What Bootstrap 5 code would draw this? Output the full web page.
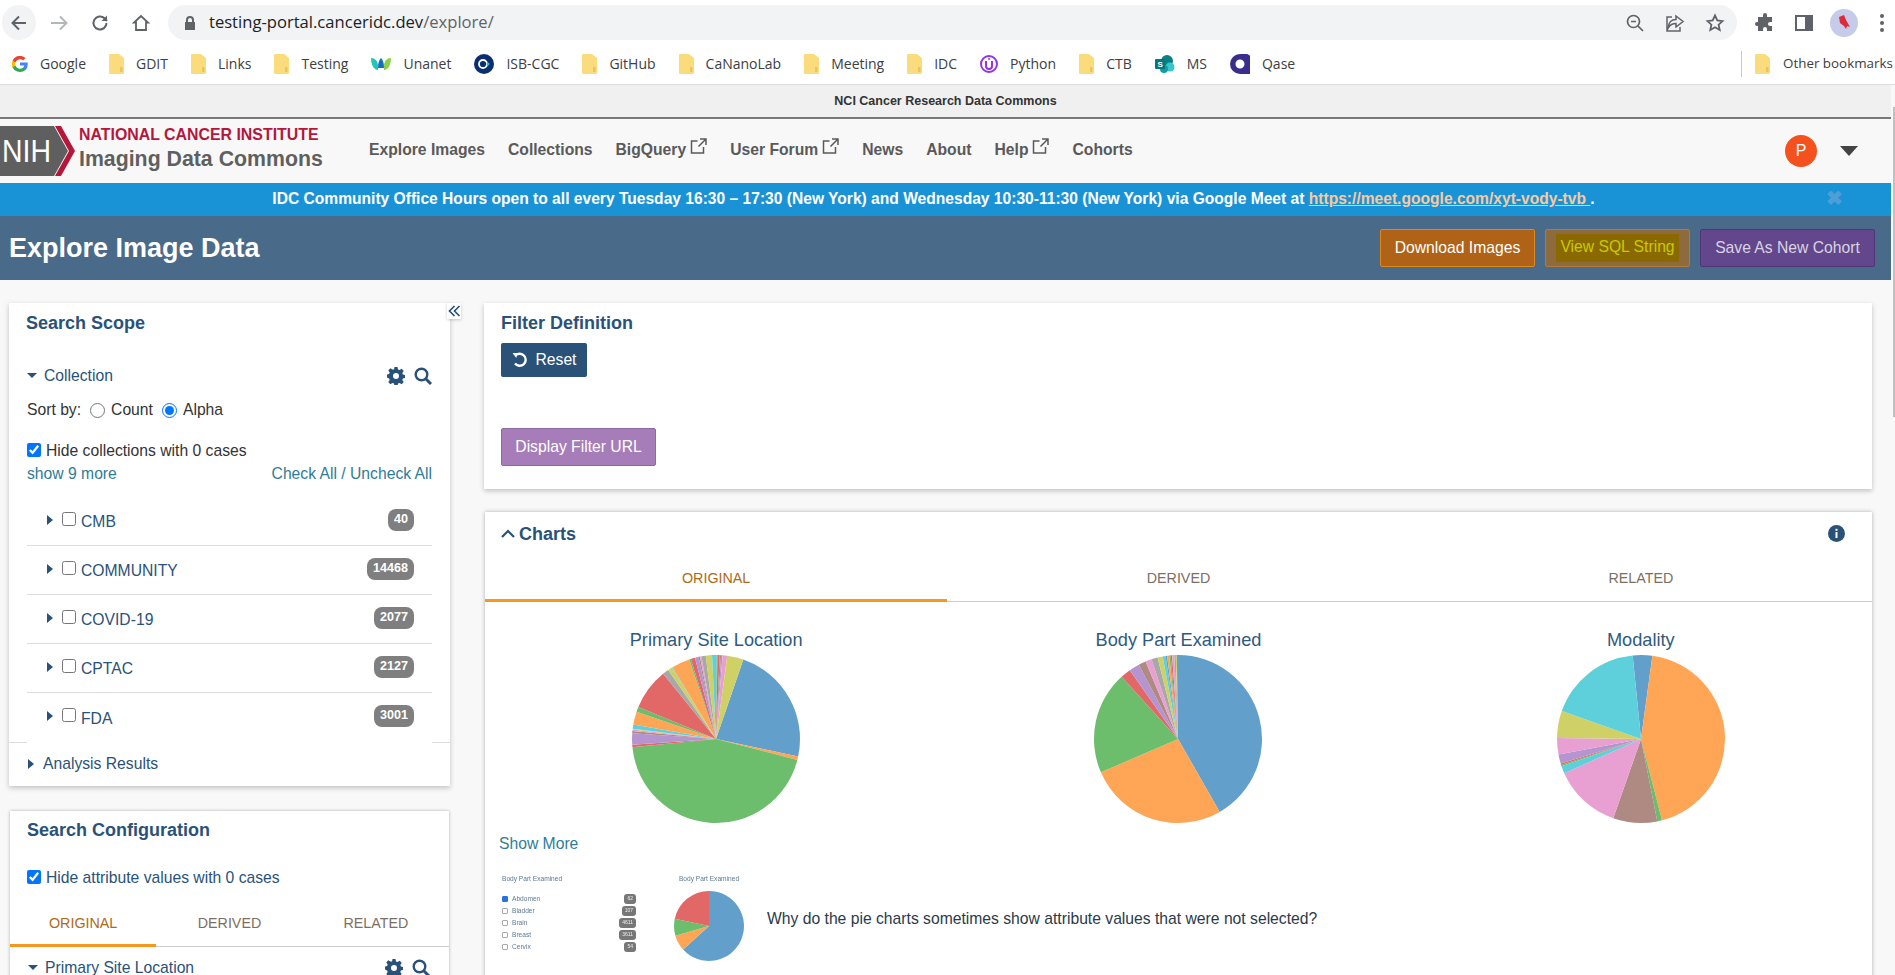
<!DOCTYPE html>
<html lang="en">
<head>
<meta charset="utf-8">
<title>Explore Image Data</title>
<link href="https://cdn.jsdelivr.net/npm/bootstrap@5.3.0/dist/css/bootstrap.min.css" rel="stylesheet">
<style>
html,body{height:975px;overflow:hidden;background:#fff}
body{font-family:"Liberation Sans",Arial,sans-serif;font-size:15.7px;color:#333;width:1895px}
/* browser chrome */
.bc-top{height:40px;padding:5px 0 0 2px}
.bc-round{width:34px;height:35px;border-radius:50%;background:#f1f3f4}
.bc-ico{width:20px;height:20px;flex:none}
.bc-trio{margin-left:13px;gap:21px}
.bc-url{height:35px;width:1570px;margin-left:17px;background:#f1f3f4;border-radius:18px;padding:0 12px 0 15px;font-family:"Open Sans","Liberation Sans",sans-serif;font-size:16.6px;color:#202124}
.bc-url span.gr{color:#5f6368}
.bc-url-tools{gap:20px}
.bc-right{width:158px;padding-left:18px}
.bc-avatar{margin-left:16px}
.bc-dots{margin-left:22px}
.bc-panel{margin-left:19px}
.bc-marks{height:45px;border-bottom:1px solid #dadce0;padding:3px 0 0 12px;font-family:"Open Sans","Liberation Sans",sans-serif;font-size:14px;color:#3c4043;gap:23px}
.bm{gap:12px}
.bm svg{flex:none}
.bm-sep{width:1px;height:26px;background:#c8c8c8}
.bm-other{margin-left:auto;gap:13px}
.bm-fit{width:112px;white-space:nowrap;font-size:13.4px}
/* page */
.page-wrap{height:890px}
.page-main{width:1891px;background:#f8f8f8;overflow:hidden}
.scroll-col{width:4px;background:#f8f8f8;padding-left:2px}
.scroll-thumb{height:310px;margin-top:22px;background:#c0c0c0}
.nci-band{height:34px;background:#f0f0f0;border-bottom:2px solid #777;font-size:12.5px;font-weight:700;color:#333}
.nci-nav{height:64px;padding:0;background:#f8f8f8}
.nci-logo{width:369px;flex:none}
.nci-link{font-size:15.7px;font-weight:700;color:#5a5a5a;text-decoration:none;padding:0;white-space:nowrap}
.nav-gap{gap:23px;padding-bottom:2px}
.nci-avatar{width:32px;height:32px;border-radius:50%;background:#f4511e;color:#fff;font-size:16px}
.nav-end{padding-right:33px;gap:23px}
.nav-caret{width:0;height:0;border-left:9px solid transparent;border-right:9px solid transparent;border-top:10px solid #444}
.info-banner{height:33px;background:#1a92d6;color:#fff;font-size:15.6px;font-weight:700;position:relative;padding-bottom:1px;padding-right:24px}
.info-banner a{color:#f7caa0}
.banner-x{position:absolute;left:1826px;top:4px;color:#4d9fd6;font-size:20px;line-height:22px;font-weight:700}
.title-band{height:64px;background:#4a6a89;padding:0 16px 0 9px}
.title-band h1{font-size:27px;font-weight:700;color:#fff;margin:0}
.band-btn{height:38px;font-size:15.7px;padding:0 10px;border-radius:2px;border:1px solid;display:flex;align-items:center;color:#fff;white-space:nowrap}
.band-dl{background:#b06316;border-color:#dc8a1e;width:155px;margin-right:10px;justify-content:center}
.band-sql{background:#8e6b3c;border-color:#b07a3a;color:#c9c900;width:145px;margin-right:10px;justify-content:center}
.band-sql span{background:#8a6a00;padding:1px 0 4px;width:128px;display:block;text-align:center}
.band-save{background:#63478c;border-color:#4e3676;color:#d9d3e4;width:175px;justify-content:center}
/* columns */
.body-row{padding:23px 19px 0 9px;height:631px}
.side-col{width:441px;flex:none;position:relative}
.main-col{margin-left:34px;width:1388px;flex:none}
.panel-box{background:#fff;box-shadow:0 2px 5px rgba(0,0,0,.22)}
.panel-scope{height:483px}
.panel-config{margin:25px 1px 0;height:300px;box-shadow:0 0 3px rgba(0,0,0,.3)}
.panel-title{font-size:18px;font-weight:700;color:#2a5278;margin:0;line-height:20px}
.collapse-tab{position:absolute;left:438px;top:0;width:14px;height:16px;background:#fff;box-shadow:0 1px 3px rgba(0,0,0,.2);display:flex;align-items:center;justify-content:center}
.navy{color:#2a5278}
.tealish{color:#2f7c95;text-decoration:none}
.fac-head{height:24px;padding:0 18px;color:#2a5278}
.scope-fac{margin-top:31px}
.fac-ctrl{gap:9px}
.dcaret{width:0;height:0;border-left:5px solid transparent;border-right:5px solid transparent;border-top:5px solid #2a5278;margin-right:7px}
.rcaret{width:0;height:0;border-top:5px solid transparent;border-bottom:5px solid transparent;border-left:6px solid #2a5278;flex:none}
input.nat{margin:0;flex:none}
input.nat[type=checkbox]{width:14px;height:14px}
input.nat[type=radio]{width:15px;height:15px}
.sort-row{height:22px;padding-left:18px;margin-top:11px}
input.nat.radio-a{margin-left:9px;margin-right:6px}
input.nat.radio-b{margin-left:9px;margin-right:6px}
.hide-row{height:22px;padding-left:18px;margin-top:19px}
.hide-row input.nat{margin-right:5px;margin-top:-3px}
.hide-row.hide-cfg{height:22px;padding-left:17px;margin-top:27px}
.link-row{height:22px;padding:0 18px;margin-top:1px}
.fac-list{margin:12px 18px 0;list-style:none;padding:0}
.fac-li{height:49px;border-bottom:1px solid #ddd;padding:0 0 0 20px;color:#2a5278}
.fac-li:last-child{border-bottom:0}
.fac-li .rcaret{margin-right:9px;margin-top:-3px}
.fac-li input.nat{margin-right:5px;margin-top:-5px}
.cnt-pill{margin-left:auto;margin-right:18px;background:#7f7f7f;color:#fff;font-weight:700;font-size:12.6px;line-height:20px;height:22px;padding:0 6px 2px;border-radius:8px;margin-top:-3px;min-width:25px;text-align:center}
.fac-li .txt{margin-top:2px}
.line-ends{border-top:1px solid #ddd;height:0;width:100%}
.line-ends::before{content:"";display:block;height:1px;margin:-1px 18px 0;background:#fff}
.analysis{height:45px;padding:0 0 4px 19px;color:#2a5278}
.analysis .rcaret{margin-right:9px}
.tab-bar{display:flex;border-bottom:1px solid #ccc;margin:0}
.tab-item{flex:1 1 0;text-align:center;font-size:14.3px;color:#7d6f63;text-transform:uppercase;padding:0;line-height:20px;text-decoration:none;border-bottom:3px solid transparent;margin-bottom:-1px}
.tab-item.on{color:#b06a17;border-bottom-color:#f7971d}
.tabs-side{margin-top:14px}
.tabs-side .tab-item{padding:10px 0 11px}
.tabs-chart .tab-item{padding:12px 0 11px}
.side-fac{margin-top:9px;padding-left:18px;padding-right:19px}
.side-pad{padding:10px 17px 0}
.cfg-pad{padding:9px 17px 0}
.filter-box{height:186px;padding:10px 17px}
.btn-reset{background:#2a5278;color:#fff;height:34px;width:86px;border:0;border-radius:2px;font-size:15.7px;margin-top:10px}
.btn-url{background:#a67db8;border:1px solid #8c6ba0;color:#fff;height:38px;width:155px;border-radius:2px;font-size:15.7px;margin-top:51px;display:block;padding:0}
.charts-box{margin:23px 0 0 1px;width:1387px;height:480px;box-shadow:0 0 4px rgba(0,0,0,.3)}
.charts-head{height:43px;padding:0 27px 0 16px;margin-bottom:1px}
.chart-grid{display:grid;grid-template-columns:repeat(3,1fr);padding-top:27px}
.chart-cell{text-align:center}
.chart-name{font-size:18.2px;color:#2f5a80;line-height:22px;margin-bottom:3px}
.pie-svg{display:block;margin:0 auto}
.show-more{display:block;margin:9px 0 0 14px;line-height:22px}
.help-row{margin-top:19px;padding-left:17px}
.thumb{width:265px;height:100px;flex:none;filter:blur(.4px);color:#5d7a96;font-size:6.6px}
.thumb-list{width:134px}
.thumb-title{margin-bottom:10px;line-height:9px;height:9px}
.thumb-row{height:12px}
.thumb-row i{display:block;width:6px;height:6px;border:1px solid #aaa;border-radius:1px;margin-right:4px}
.thumb-row i.ck{background:#2a72e0;border-color:#2a72e0}
.thumb-row b{margin-left:auto;background:#777;color:#eee;border-radius:3px;font-weight:400;font-size:5px;padding:1px 3px}
.thumb-pie{margin-left:37px;text-align:center;width:72px}
.thumb-cap{line-height:9px;height:9px;margin-bottom:7px}
.why{color:#2b3a4a;margin-top:-10px}
.ext-ic{margin-left:4px;vertical-align:1px}
</style>
</head>
<body>
<!-- browser toolbar -->
<div class="bc-top d-flex">
  <div class="bc-round d-flex align-items-center justify-content-center"><svg class="bc-ico" viewBox="0 0 20 20" fill="none" stroke="#5f6368" stroke-width="2"><path d="M17 10H4M10 3.500 3.500 10l6.500 6.500"/></svg></div>
  <div class="d-flex align-items-center bc-trio">
    <svg class="bc-ico" viewBox="0 0 20 20" fill="none" stroke="#b4b7ba" stroke-width="2"><path d="M2 10h15M11 3.500 17.500 10 11 16.500"/></svg>
    <svg class="bc-ico" viewBox="0 0 20 20" fill="none" stroke="#5f6368" stroke-width="2"><path d="M16.500 10a6.500 6.500 0 1 1-2-4.700L17 8"/><path d="M17 2.500V8h-5.500" fill="#5f6368" stroke="none"/></svg>
    <svg class="bc-ico" viewBox="0 0 20 20" fill="none" stroke="#5f6368" stroke-width="1.800"><path d="M10 3 3 9.500h2V17h10V9.500h2z"/></svg>
  </div>
  <div class="bc-url d-flex align-items-center">
    <svg width="14" height="16" viewBox="0 0 14 16" class="me-2"><path d="M3 7V5a4 4 0 0 1 8 0v2h1v8H2V7zm2 0h4V5a2 2 0 0 0-4 0z" fill="#5f6368"/></svg>
    <span class="ms-1">testing-portal.canceridc.dev<span class="gr">/explore/</span></span>
    <div class="ms-auto d-flex align-items-center bc-url-tools">
      <svg class="bc-ico" viewBox="0 0 20 20" fill="none" stroke="#5f6368" stroke-width="1.700"><circle cx="8.500" cy="8.500" r="6"/><path d="M13 13l5 5M6 8.500h5"/></svg>
      <svg class="bc-ico" viewBox="0 0 20 20" fill="none" stroke="#5f6368" stroke-width="1.500"><path d="M11 3l7 5.500-7 5.500v-3.500c-4 0-6 1.500-7.500 4 0-5 3-8 7.500-8zM7 4H2v14h13v-4"/></svg>
      <svg class="bc-ico" viewBox="0 0 20 20" fill="none" stroke="#5f6368" stroke-width="1.800"><path d="M10 2.500l2.300 5 5.200.6-3.900 3.600 1.100 5.300-4.700-2.700-4.700 2.700 1.100-5.300-3.900-3.600 5.200-.6z"/></svg>
    </div>
  </div>
  <div class="bc-right d-flex align-items-center">
    <svg class="bc-ico" viewBox="0 0 20 20" fill="#5f6368"><path d="M8 2a2 2 0 0 1 4 0v2h5v5h-2a2 2 0 0 0 0 4h2v5h-5v-2a2 2 0 0 0-4 0v2H3v-5H2a2 2 0 0 1 0-4h1V4h5z"/></svg>
    <svg class="bc-ico bc-panel" viewBox="0 0 20 20"><path d="M1 2h18v16H1zM3 4v12h8V4z" fill="#5f6368" fill-rule="evenodd"/></svg>
    <svg class="bc-avatar" width="28" height="28" viewBox="0 0 28 28"><circle cx="14" cy="14" r="14" fill="#c5cbe9"/><path d="M9 8l5-2 2 5 4 7-3-1-1 3-2-3-4-3z" fill="#dd2a3a"/></svg>
    <svg class="bc-dots" width="4" height="18" viewBox="0 0 4 18" fill="#5f6368"><circle cx="2" cy="2" r="2"/><circle cx="2" cy="9" r="2"/><circle cx="2" cy="16" r="2"/></svg>
  </div>
</div>
<!-- bookmarks -->
<div class="bc-marks d-flex align-items-center" id="marks"></div>
<div class="page-wrap d-flex">
<div class="page-main">
  <div class="nci-band d-flex align-items-center justify-content-center">NCI Cancer Research Data Commons</div>
  <nav class="navbar nci-nav flex-nowrap">
    <div class="nci-logo d-flex align-items-center">
      <svg width="330" height="50" viewBox="0 0 330 50">
        <path d="M0 0H54L68 25 54 50H0z" fill="#5f5f5f"/>
        <path d="M55 0h6l14 25-14 25h-6l14-25z" fill="#b5163c"/>
        <text x="2" y="36" font-family="Liberation Sans" font-size="31" fill="#fff" textLength="49" lengthAdjust="spacingAndGlyphs">NIH</text>
        <text x="79" y="14" font-family="Liberation Sans" font-weight="700" font-size="15.900" fill="#b5163c">NATIONAL CANCER INSTITUTE</text>
        <text x="79" y="40" font-family="Liberation Sans" font-weight="700" font-size="21.300" fill="#5f5f5f">Imaging Data Commons</text>
      </svg>
    </div>
    <div class="d-flex align-items-center nav-gap me-auto" id="navlinks"></div>
    <div class="d-flex align-items-center nav-end">
      <div class="nci-avatar d-flex align-items-center justify-content-center">P</div>
      <div class="nav-caret"></div>
    </div>
  </nav>
  <div class="info-banner d-flex align-items-center justify-content-center">
    <span>IDC Community Office Hours open to all every Tuesday 16:30 – 17:30 (New York) and Wednesday 10:30-11:30 (New York) via Google Meet at <a href="#">https://meet.google.com/xyt-vody-tvb </a>.</span>
    <span class="banner-x">✖</span>
  </div>
  <div class="title-band d-flex align-items-center justify-content-between">
    <h1>Explore Image Data</h1>
    <div class="d-flex">
      <div class="band-btn band-dl">Download Images</div>
      <div class="band-btn band-sql"><span>View SQL String</span></div>
      <div class="band-btn band-save">Save As New Cohort</div>
    </div>
  </div>
  <div class="body-row d-flex">
    <div class="side-col">
      <div class="panel-box panel-scope">
        <div class="side-pad"><h2 class="panel-title">Search Scope</h2></div>
        <div class="fac-head scope-fac d-flex align-items-center justify-content-between">
          <div class="d-flex align-items-center"><span class="dcaret"></span>Collection</div>
          <div class="d-flex fac-ctrl">
            <svg width="18" height="18" viewBox="0 0 18 18"><path fill="#2a5278" fill-rule="evenodd" d="M7.500 0h3l.5 2.400 1.500.7L14.700 1.800l2 2.200-1.400 2 .6 1.500 2.100.5v3l-2.100.5-.6 1.500 1.400 2-2 2.200-2.200-1.300-1.500.6-.5 2.500h-3L7 16.500l-1.500-.6-2.200 1.300-2-2.200 1.400-2-.6-1.500L0 10.500v-3l2.100-.5.6-1.500-1.400-2 2-2.200 2.200 1.300L7 2.400zM9 6a3 3 0 1 0 0 6 3 3 0 0 0 0-6z"/></svg>
            <svg width="18" height="18" viewBox="0 0 18 18" fill="none" stroke="#2a5278" stroke-width="2.400"><circle cx="7.500" cy="7.500" r="5.800"/><path d="M11.500 11.500 17 17" stroke-width="3"/></svg>
          </div>
        </div>
        <div class="sort-row d-flex align-items-center">Sort by:<input class="nat radio-a" type="radio" name="s">Count<input class="nat radio-b" type="radio" name="s" checked>Alpha</div>
        <div class="hide-row d-flex align-items-center"><input class="nat" type="checkbox" checked>Hide collections with 0 cases</div>
        <div class="link-row d-flex align-items-center justify-content-between"><a class="tealish" href="#">show 9 more</a><span class="tealish"><a class="tealish" href="#">Check All</a> / <a class="tealish" href="#">Uncheck All</a></span></div>
        <ul class="fac-list" id="faclist"></ul>
        <div class="line-ends"></div>
        <div class="analysis d-flex align-items-center"><span class="rcaret"></span>Analysis Results</div>
      </div>
      <div class="collapse-tab"><svg width="13" height="12" viewBox="0 0 13 12" fill="none" stroke="#2a5278" stroke-width="1.700"><path d="M6.500 1 1.500 6l5 5M11.500 1l-5 5 5 5"/></svg></div>
      <div class="panel-box panel-config">
        <div class="cfg-pad"><h2 class="panel-title">Search Configuration</h2></div>
        <div class="hide-row hide-cfg d-flex align-items-center navy"><input class="nat" type="checkbox" checked>Hide attribute values with 0 cases</div>
        <div class="tab-bar tabs-side">
          <a class="tab-item on" href="#">Original</a><a class="tab-item" href="#">Derived</a><a class="tab-item" href="#">Related</a>
        </div>
        <div class="fac-head side-fac d-flex align-items-center justify-content-between">
          <div class="d-flex align-items-center"><span class="dcaret"></span>Primary Site Location</div>
          <div class="d-flex fac-ctrl">
            <svg width="18" height="18" viewBox="0 0 18 18"><path fill="#2a5278" fill-rule="evenodd" d="M7.500 0h3l.5 2.400 1.500.7L14.700 1.800l2 2.200-1.400 2 .6 1.500 2.100.5v3l-2.100.5-.6 1.500 1.400 2-2 2.200-2.200-1.300-1.500.6-.5 2.500h-3L7 16.500l-1.500-.6-2.200 1.300-2-2.200 1.400-2-.6-1.500L0 10.500v-3l2.100-.5.6-1.500-1.400-2 2-2.200 2.200 1.300L7 2.400zM9 6a3 3 0 1 0 0 6 3 3 0 0 0 0-6z"/></svg>
            <svg width="18" height="18" viewBox="0 0 18 18" fill="none" stroke="#2a5278" stroke-width="2.400"><circle cx="7.500" cy="7.500" r="5.800"/><path d="M11.500 11.500 17 17" stroke-width="3"/></svg>
          </div>
        </div>
      </div>
    </div>
    <div class="main-col">
      <div class="panel-box filter-box">
        <h2 class="panel-title">Filter Definition</h2>
        <button class="btn-reset d-flex align-items-center justify-content-center gap-2">
          <svg width="16" height="16" viewBox="0 0 16 16" fill="none" stroke="#fff" stroke-width="2.400"><path d="M3.500 3.500A6 6 0 1 1 3 11.500"/><path d="M.5 1h5l-1.200 5z" fill="#fff" stroke="none"/></svg>
          <span>Reset</span></button>
        <button class="btn-url">Display Filter URL</button>
      </div>
      <div class="panel-box charts-box">
        <div class="charts-head d-flex align-items-center justify-content-between">
          <div class="d-flex align-items-center gap-1"><svg width="14" height="9" viewBox="0 0 14 9" fill="none" stroke="#2a5278" stroke-width="2.200"><path d="M1 8l6-6 6 6"/></svg><span class="panel-title">Charts</span></div>
          <svg width="17" height="17" viewBox="0 0 17 17"><circle cx="8.500" cy="8.500" r="8.500" fill="#2a5278"/><rect x="7.500" y="7" width="2" height="6" fill="#fff"/><rect x="7.500" y="3.800" width="2" height="2" fill="#fff"/></svg>
        </div>
        <div class="tab-bar tabs-chart">
          <a class="tab-item on" href="#">Original</a><a class="tab-item" href="#">Derived</a><a class="tab-item" href="#">Related</a>
        </div>
        <div class="chart-grid">
          <div class="chart-cell"><div class="chart-name">Primary Site Location</div><svg class="pie-svg" id="pie1" width="170" height="170" viewBox="-85 -85 170 170"></svg></div>
          <div class="chart-cell"><div class="chart-name">Body Part Examined</div><svg class="pie-svg" id="pie2" width="170" height="170" viewBox="-85 -85 170 170"></svg></div>
          <div class="chart-cell"><div class="chart-name">Modality</div><svg class="pie-svg" id="pie3" width="170" height="170" viewBox="-85 -85 170 170"></svg></div>
        </div>
        <a class="tealish show-more" href="#">Show More</a>
        <div class="help-row d-flex align-items-center">
          <div class="thumb d-flex">
            <div class="thumb-list">
              <div class="thumb-title">Body Part Examined</div>
              <div class="thumb-row d-flex align-items-center"><i class="ck"></i>Abdomen<b>62</b></div>
              <div class="thumb-row d-flex align-items-center"><i></i>Bladder<b>107</b></div>
              <div class="thumb-row d-flex align-items-center"><i></i>Brain<b>4611</b></div>
              <div class="thumb-row d-flex align-items-center"><i></i>Breast<b>3611</b></div>
              <div class="thumb-row d-flex align-items-center"><i></i>Cervix<b>54</b></div>
            </div>
            <div class="thumb-pie">
              <div class="thumb-cap">Body Part Examined</div>
              <svg class="pie-svg" id="pie4" width="72" height="72" viewBox="-36 -36 72 72"></svg>
            </div>
          </div>
          <div class="why">Why do the pie charts sometimes show attribute values that were not selected?</div>
        </div>
      </div>
    </div>
  </div>
</div>
<div class="scroll-col"><div class="scroll-thumb"></div></div>
</div>
<script src="https://cdn.jsdelivr.net/npm/bootstrap@5.3.0/dist/js/bootstrap.bundle.min.js"></script>
<script>
var ext='<svg class="ext-ic" width="17" height="16" viewBox="0 0 17 16" fill="none" stroke="#5a5a5a" stroke-width="1.500"><path d="M13.500 9v6h-12V3h6M10 1h6v6M16 1 8.500 8.500"/></svg>';
document.getElementById('navlinks').innerHTML=[['Explore Images'],['Collections'],['BigQuery',1],['User Forum',1],['News'],['About'],['Help',1],['Cohorts']].map(function(n){return '<a class="nci-link" href="#">'+n[0]+(n[1]?ext:'')+'</a>';}).join('');
var folder='<svg width="15" height="20" viewBox="0 0 15 20"><path d="M1 0h9l5 4v15a1 1 0 0 1-1 1H1a1 1 0 0 1-1-1V1a1 1 0 0 1 1-1z" fill="#fbdc7d"/><rect x="11" y="13" width="2.500" height="5" fill="#e9c55e"/></svg>';
var ic={
g:'<svg width="16" height="16" viewBox="0 0 16 16"><path d="M15.700 8.200c0-.6 0-1.100-.1-1.600H8v3h4.400c-.2 1-.8 1.800-1.600 2.400v2h2.600c1.500-1.400 2.300-3.400 2.300-5.800z" fill="#4285f4"/><path d="M8 16c2.200 0 4-.7 5.400-2l-2.600-2c-.7.500-1.700.8-2.800.8-2.100 0-3.900-1.400-4.600-3.300H.7v2.100A8 8 0 0 0 8 16z" fill="#34a853"/><path d="M3.400 9.500a4.800 4.800 0 0 1 0-3V4.400H.7a8 8 0 0 0 0 7.200z" fill="#fbbc05"/><path d="M8 3.200c1.200 0 2.300.4 3.100 1.200l2.400-2.300A8 8 0 0 0 .7 4.400l2.700 2.100C4.100 4.600 5.900 3.200 8 3.200z" fill="#ea4335"/></svg>',
u:'<svg width="20" height="16" viewBox="0 0 20 16"><path d="M0 2c4 0 7 3 7 8v4C3 14 0 9 0 2z" fill="#1ec7b6"/><path d="M20 2c-4 0-7 3-7 8v4c4 0 7-5 7-12z" fill="#8ad14a"/><path d="M7 12c0-5 1-8 3-10 2 2 3 5 3 10z" fill="#176fc1"/></svg>',
c:'<svg width="20" height="20" viewBox="0 0 20 20"><circle cx="10" cy="10" r="10" fill="#0a2f6e"/><circle cx="9" cy="10" r="4" fill="none" stroke="#fff" stroke-width="1.800"/><circle cx="14" cy="10" r="1.500" fill="#2bb5e8"/></svg>',
p:'<svg width="18" height="18" viewBox="0 0 18 18"><circle cx="9" cy="9" r="8" fill="#fff" stroke="#9333ea" stroke-width="2"/><path d="M6 6v5a3 3 0 0 0 6 0V6" fill="none" stroke="#9333ea" stroke-width="2"/><circle cx="9" cy="4" r="1" fill="#9333ea"/></svg>',
m:'<svg width="20" height="20" viewBox="0 0 20 20"><circle cx="12" cy="7" r="6" fill="#0b7f85"/><circle cx="15" cy="13" r="4.500" fill="#37c6d0"/><circle cx="9" cy="15" r="4" fill="#109ea6"/><rect x="0" y="5" width="10" height="10" rx="1" fill="#03787c"/><text x="2.500" y="13" font-size="8" font-family="Liberation Sans" font-weight="700" fill="#fff">S</text></svg>',
q:'<svg width="20" height="20" viewBox="0 0 20 20"><path d="M10 0a10 10 0 0 0 0 20h10v-3a10 10 0 0 0-10-17zm0 5.500a4.500 4.500 0 1 1 0 9 4.500 4.500 0 0 1 0-9z" fill="#3b2d8e" fill-rule="evenodd"/></svg>'};
var marks=[[ic.g,'Google'],[folder,'GDIT'],[folder,'Links'],[folder,'Testing'],[ic.u,'Unanet'],[ic.c,'ISB-CGC'],[folder,'GitHub'],[folder,'CaNanoLab'],[folder,'Meeting'],[folder,'IDC'],[ic.p,'Python'],[folder,'CTB'],[ic.m,'MS'],[ic.q,'Qase']];
document.getElementById('marks').innerHTML=marks.map(function(m){return '<div class="bm d-flex align-items-center">'+m[0]+'<span>'+m[1]+'</span></div>';}).join('')+'<div class="bm-other d-flex align-items-center"><div class="bm-sep"></div>'+folder+'<span class="bm-fit">Other bookmarks</span></div>';
document.getElementById('faclist').innerHTML=[['CMB',40],['COMMUNITY',14468],['COVID-19',2077],['CPTAC',2127],['FDA',3001]].map(function(f){return '<li class="fac-li d-flex align-items-center"><span class="rcaret"></span><input class="nat" type="checkbox"><span class="txt">'+f[0]+'</span><span class="cnt-pill">'+f[1]+'</span></li>';}).join('');
var C={b:'#629fca',o:'#ffa556',g:'#6cbd6c',r:'#e26868',u:'#b495d0',n:'#ae8a82',p:'#e8a0d3',y:'#a8a8a8',l:'#cfd166',c:'#5dd0dc'};
function pie(id,r,start,sl){var a=start,h='';sl.forEach(function(s){var e=s[1],x1=r*Math.sin(a*Math.PI/180),y1=-r*Math.cos(a*Math.PI/180),x2=r*Math.sin(e*Math.PI/180),y2=-r*Math.cos(e*Math.PI/180);h+='<path fill="'+C[s[0]]+'" d="M0 0L'+x1.toFixed(2)+' '+y1.toFixed(2)+'A'+r+' '+r+' 0 '+((e-a)>180?1:0)+' 1 '+x2.toFixed(2)+' '+y2.toFixed(2)+'Z"/>';a=e;});document.getElementById(id).innerHTML=h;}
pie('pie1',84,19,[['b',102],['o',104.4],['g',264.3],['r',266],['u',274],['n',275.5],['p',276.5],['l',277],['c',280],['o',289],['g',292.4],['r',321],['y',325.3],['l',328.3],['c',328.8],['o',341.4],['g',342.5],['r',345.5],['u',348],['n',349],['p',350],['y',353],['l',357.3],['c',360.5],['g',361],['r',362.5],['n',363.5],['u',364.5],['p',367.7],['l',379]]);
pie('pie2',84,0,[['b',150.2],['o',246.6],['g',317.8],['r',325],['u',332.2],['n',337.3],['p',341.6],['y',345.9],['l',349.5],['c',351.5],['b',352.5],['o',354],['g',355],['r',356],['p',357.5],['y',358.5],['l',359.2],['n',360]]);
pie('pie3',84,354.3-360,[['b',7.8],['o',165.5],['g',168.8],['n',199.3],['p',246],['c',251.1],['g',252],['r',253],['u',259.3],['p',270.7],['l',289.4],['c',354.3]]);
pie('pie4',35,0,[['b',227.6],['o',254],['g',282],['r',360]]);
</script>
</body>
</html>
